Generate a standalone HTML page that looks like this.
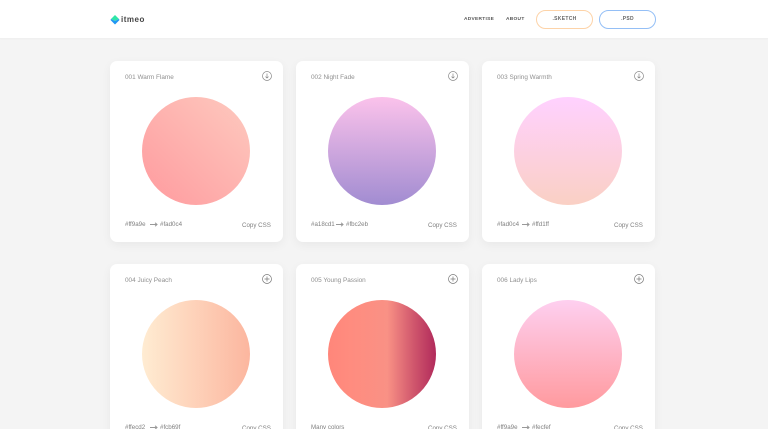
<!DOCTYPE html>
<html><head><meta charset="utf-8"><style>
html,body{margin:0;padding:0;width:768px;height:429px;overflow:hidden;background:#f4f4f4;font-family:"Liberation Sans",sans-serif}
#w{position:relative;width:768px;height:429px;overflow:hidden;background:#f4f4f4}
#h{position:absolute;left:0;top:0;width:768px;height:38px;background:#fff;box-shadow:0 1px 1px #eee}
.t{position:absolute;white-space:nowrap;filter:blur(.35px)}
.nav{font-size:4.8px;font-weight:bold;color:#555;letter-spacing:.3px;top:16.5px}
.btn{position:absolute;top:10px;height:19px;box-sizing:border-box;border-radius:10px;border:1.6px solid;background:#fff;font-size:5px;font-weight:bold;color:#666;text-align:center;line-height:16px;letter-spacing:.3px}
.c{position:absolute;width:173px;height:181px;background:#fff;border-radius:7px;box-shadow:0 3px 10px rgba(0,0,0,.05)}
.n{position:absolute;left:15px;top:12.5px;font-size:6.4px;color:#909090;white-space:nowrap;filter:blur(.3px)}
.o{position:absolute;left:32px;top:36px;width:108px;height:108px;border-radius:50%}
.h{position:absolute;left:15px;top:160px;font-size:6.2px;color:#808080;white-space:nowrap;filter:blur(.3px)}
.a{position:absolute;top:162.5px;left:40px;width:7px;height:1px;background:#999}
.a:after{content:"";position:absolute;right:0;top:-1px;width:2px;height:2px;border-top:.7px solid #999;border-right:.7px solid #999;transform:rotate(45deg)}
.cp{position:absolute;left:132px;top:160.5px;font-size:6.2px;color:#808080;white-space:nowrap;filter:blur(.3px)}
svg.d{position:absolute;left:152px;top:10px;width:10px;height:10px;filter:blur(.2px)}
</style></head><body><div id="w">
<div id="h"></div>
<svg style="position:absolute;left:110px;top:15px" width="10" height="10" viewBox="0 0 10 10"><path d="M5 0L9 4 5 6 1 4Z" fill="#2ee6a8"/><path d="M1 4L5 6 9 4 9.5 5 5 9.5 .5 5Z" fill="#2196f3"/></svg>
<div class="t" style="left:121px;top:15px;font-size:8px;font-weight:bold;color:#444;letter-spacing:.5px">itmeo</div>
<div class="t nav" style="left:464px">ADVERTISE</div>
<div class="t nav" style="left:506px">ABOUT</div>
<div class="btn" style="left:536px;width:57px;border-color:#fdd3a8">.SKETCH</div>
<div class="btn" style="left:599px;width:57px;border-color:#94bff6">.PSD</div>

<div class="c" style="left:110px;top:61px"><div class="n">001 Warm Flame</div><svg class="d" viewBox="0 0 10 10"><circle cx="5" cy="5" r="4.5" fill="none" stroke="#888" stroke-width=".7"/><path d="M5 2.5V7M3.5 5.6L5 7 6.5 5.6" fill="none" stroke="#888" stroke-width=".7"/></svg>
<div class="o" style="background:linear-gradient(45deg,#ff9a9e 0%,#fdcabf 100%)"></div><div class="h">#ff9a9e</div><div class="a"></div><div class="h" style="left:50px">#fad0c4</div><div class="cp">Copy CSS</div></div>

<div class="c" style="left:296px;top:61px"><div class="n">002 Night Fade</div><svg class="d" viewBox="0 0 10 10"><circle cx="5" cy="5" r="4.5" fill="none" stroke="#888" stroke-width=".7"/><path d="M5 2.5V7M3.5 5.6L5 7 6.5 5.6" fill="none" stroke="#888" stroke-width=".7"/></svg>
<div class="o" style="background:linear-gradient(to top,#a18cd1 0%,#fbc2eb 100%)"></div><div class="h">#a18cd1</div><div class="a"></div><div class="h" style="left:50px">#fbc2eb</div><div class="cp">Copy CSS</div></div>

<div class="c" style="left:482px;top:61px"><div class="n">003 Spring Warmth</div><svg class="d" viewBox="0 0 10 10"><circle cx="5" cy="5" r="4.5" fill="none" stroke="#888" stroke-width=".7"/><path d="M5 2.5V7M3.5 5.6L5 7 6.5 5.6" fill="none" stroke="#888" stroke-width=".7"/></svg>
<div class="o" style="background:linear-gradient(to top,#fad0c4 0%,#ffd1ff 100%)"></div><div class="h">#fad0c4</div><div class="a"></div><div class="h" style="left:50px">#ffd1ff</div><div class="cp">Copy CSS</div></div>

<div class="c" style="left:110px;top:264px"><div class="n">004 Juicy Peach</div><svg class="d" viewBox="0 0 10 10"><circle cx="5" cy="5" r="4.5" fill="none" stroke="#777" stroke-width=".7"/><path d="M5 2.5V7.5M2.5 5H7.5" fill="none" stroke="#777" stroke-width=".7"/></svg>
<div class="o" style="background:linear-gradient(to right,#ffecd2 0%,#fcb69f 100%)"></div><div class="h">#ffecd2</div><div class="a"></div><div class="h" style="left:50px">#fcb69f</div><div class="cp">Copy CSS</div></div>

<div class="c" style="left:296px;top:264px"><div class="n">005 Young Passion</div><svg class="d" viewBox="0 0 10 10"><circle cx="5" cy="5" r="4.5" fill="none" stroke="#777" stroke-width=".7"/><path d="M5 2.5V7.5M2.5 5H7.5" fill="none" stroke="#777" stroke-width=".7"/></svg>
<div class="o" style="background:linear-gradient(to right,#ff8177 0%,#ff867a 0%,#ff8c7f 21%,#f99185 55%,#cf556c 80%,#b12a5b 100%)"></div><div class="h">Many colors</div><div class="cp">Copy CSS</div></div>

<div class="c" style="left:482px;top:264px"><div class="n">006 Lady Lips</div><svg class="d" viewBox="0 0 10 10"><circle cx="5" cy="5" r="4.5" fill="none" stroke="#777" stroke-width=".7"/><path d="M5 2.5V7.5M2.5 5H7.5" fill="none" stroke="#777" stroke-width=".7"/></svg>
<div class="o" style="background:linear-gradient(to top,#ff9a9e 0%,#fecfef 99%,#fecfef 100%)"></div><div class="h">#ff9a9e</div><div class="a"></div><div class="h" style="left:50px">#fecfef</div><div class="cp">Copy CSS</div></div>
</div></body></html>
